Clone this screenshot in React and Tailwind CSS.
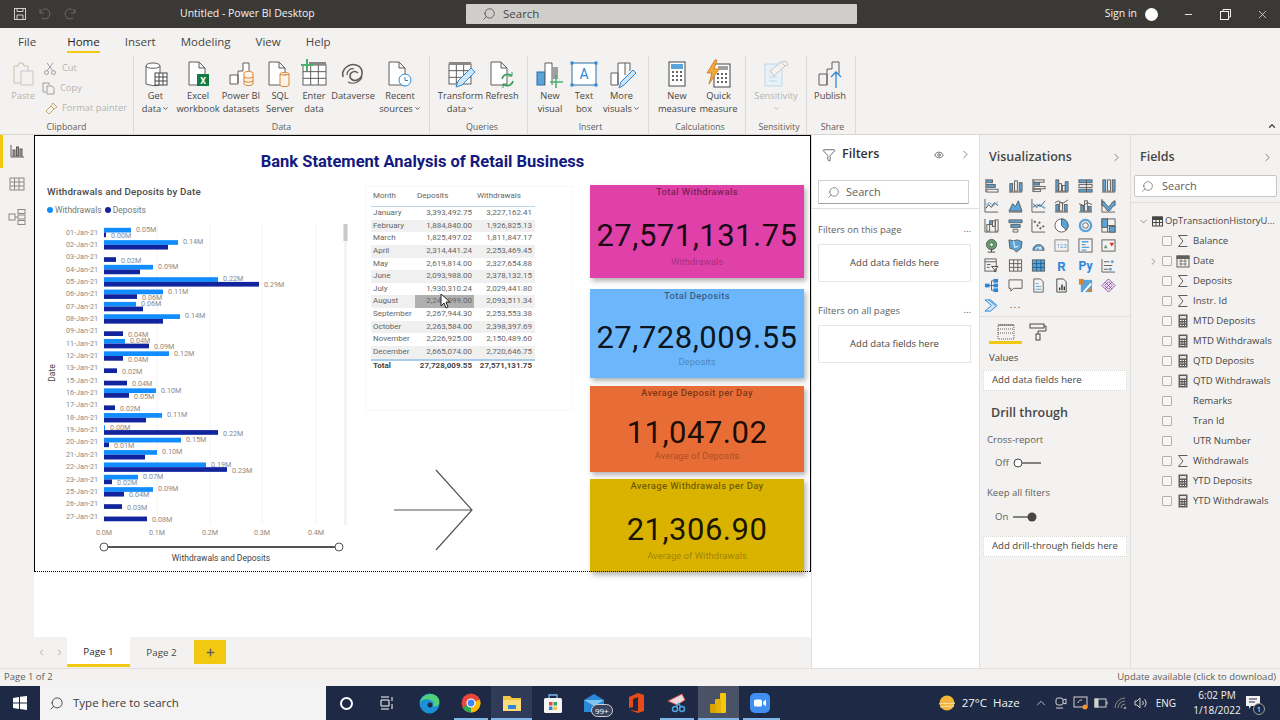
import React from "react";
import { Search, ChevronRight, ChevronDown, ChevronUp, Eye, Filter, X, Minus, Plus } from "lucide-react";

const bars = [
  ["01-Jan-21", 27, 2, "0.05M", "0.00M"],
  ["02-Jan-21", 74, 64, "0.14M", ""],
  ["03-Jan-21", 0, 12, "", "0.02M"],
  ["04-Jan-21", 49, 36, "0.09M", ""],
  ["05-Jan-21", 114, 155, "0.22M", "0.29M"],
  ["06-Jan-21", 59, 33, "0.11M", "0.06M"],
  ["07-Jan-21", 32, 39, "0.06M", ""],
  ["08-Jan-21", 76, 59, "0.14M", ""],
  ["09-Jan-21", 0, 19, "", "0.04M"],
  ["11-Jan-21", 21, 45, "0.04M", "0.09M"],
  ["12-Jan-21", 65, 19, "0.12M", "0.04M"],
  ["13-Jan-21", 0, 13, "", "0.02M"],
  ["15-Jan-21", 0, 23, "", "0.04M"],
  ["16-Jan-21", 52, 25, "0.10M", "0.05M"],
  ["17-Jan-21", 0, 11, "", "0.02M"],
  ["18-Jan-21", 58, 42, "0.11M", ""],
  ["19-Jan-21", 1, 114, "0.00M", "0.22M"],
  ["20-Jan-21", 77, 5, "0.15M", "0.01M"],
  ["21-Jan-21", 53, 41, "0.10M", ""],
  ["22-Jan-21", 102, 123, "0.19M", "0.23M"],
  ["23-Jan-21", 34, 8, "0.07M", "0.02M"],
  ["25-Jan-21", 49, 20, "0.09M", "0.04M"],
  ["26-Jan-21", 0, 18, "", "0.03M"],
  ["27-Jan-21", 0, 43, "", "0.08M"],
];

const months = [
  ["January", "3,393,492.75", "3,227,162.41"],
  ["February", "1,884,840.00", "1,926,825.13"],
  ["March", "1,825,497.02", "1,811,847.17"],
  ["April", "2,314,441.24", "2,253,469.45"],
  ["May", "2,619,814.00", "2,327,654.88"],
  ["June", "2,093,988.00", "2,378,132.15"],
  ["July", "1,930,310.24", "2,029,441.80"],
  ["August", "2,242,099.00", "2,093,511.34"],
  ["September", "2,267,944.30", "2,253,553.38"],
  ["October", "2,263,584.00", "2,398,397.69"],
  ["November", "2,226,925.00", "2,150,489.60"],
  ["December", "2,665,074.00", "2,720,646.75"],
];

const G = "#605e5c";
const B = "#5ba4d9";

const Ico = ({ children, s = 30, v = 30, stroke = G }) => (
  <svg width={s} height={s} viewBox={`0 0 ${v} ${v}`} fill="none" stroke={stroke} strokeWidth="1">
    {children}
  </svg>
);

const Grid3 = ({ x, y, w, h, stroke = G }) => (
  <g stroke={stroke}>
    <rect x={x} y={y} width={w} height={h} fill="#fff" />
    <path d={`M${x} ${y + h / 3}h${w}M${x} ${y + (2 * h) / 3}h${w}M${x + w / 3} ${y}v${h}M${x + (2 * w) / 3} ${y}v${h}`} />
  </g>
);

const Doc = ({ x = 6, stroke = G }) => (
  <path d={`M${x} 3h10l6 6v17h-16z M${x + 10} 3v6h6`} stroke={stroke} fill="#fff" />
);

const ribbonIcons = {
  paste: (
    <Ico stroke="#cbbfa9">
      <path d="M6 7h4l1-3h4l1 3h4v5M6 7v17h7" fill="#f3f2f1" />
      <path d="M13 12h12v14H13z" fill="#f3f2f1" stroke="#c8c6c4" />
    </Ico>
  ),
  getdata: (
    <Ico>
      <path d="M5 7c0-4 14-4 14 0v18c0 2-6 2.500-14 0z" fill="#fff" />
      <path d="M5 7c0 3 14 3 14 0" />
      <Grid3 x={14} y={14} w={12} h={12} stroke="#444" />
    </Ico>
  ),
  excel: (
    <Ico>
      <Doc />
      <rect x="14" y="15" width="12" height="12" fill="#107c41" stroke="none" />
      <text x="20" y="24.500" textAnchor="middle" fontSize="9" fontWeight="700" fill="#fff" stroke="none" fontFamily="Roboto, sans-serif">X</text>
    </Ico>
  ),
  pbi: (
    <Ico>
      <path d="M12 24V12h5V4h6v8M4 16h8v9H4z" fill="#fff" />
      <path d="M18 14c0-2 9-2 9 0v11c0 2-9 2-9 0z M18 18c2 1.500 7 1.500 9 0M18 22c2 1.500 7 1.500 9 0" stroke="#d9822b" fill="#fdf3e6" />
    </Ico>
  ),
  sql: (
    <Ico>
      <Doc x={4} />
      <path d="M15 15c0-2 9-2 9 0v11c0 2-9 2-9 0z M15 15c2 1.500 7 1.500 9 0" stroke="#d9822b" fill="#fdf3e6" />
    </Ico>
  ),
  enter: (
    <Ico>
      <Grid3 x={4} y={6} w={23} h={20} />
      <rect x="10" y="3" width="17" height="3" fill="#8a8886" stroke="none" />
      <path d="M8 0v12M2 6h12" stroke="#4caf6d" strokeWidth="2" />
    </Ico>
  ),
  dataverse: (
    <Ico>
      <path d="M5 18c-2-8 6-14 13-12 7 2 8 10 3 14-4 3-9 1-9-3 0-4 5-6 8-3" strokeWidth="1.600" />
      <path d="M10 23c5 3 12 0 14-5M9 16c0-5 4-7 7-6" strokeWidth="1.200" />
    </Ico>
  ),
  recent: (
    <Ico>
      <Doc x={4} />
      <circle cx="20" cy="21" r="6" fill="#fff" stroke="#2b88d8" />
      <path d="M20 18v3.500h3" stroke="#2b88d8" />
    </Ico>
  ),
  transform: (
    <Ico>
      <Grid3 x={3} y={5} w={22} h={20} />
      <rect x="3" y="3" width="22" height="3" fill="#8a8886" stroke="none" />
      <path d="M10 28l2-6 13-13 4 4-13 13z" fill="#cfe4f5" stroke="#2b88d8" />
    </Ico>
  ),
  refresh: (
    <Ico>
      <Doc x={4} />
      <path d="M15 20a6 6 0 0 1 10-3M26 22a6 6 0 0 1-10 3" stroke="#3a9a5c" strokeWidth="1.500" />
      <path d="M25 13v4h-4M16 29v-4h4" stroke="#3a9a5c" />
    </Ico>
  ),
  newvisual: (
    <Ico>
      <rect x="2" y="13" width="8" height="13" fill="#5ba4d9" stroke="#2b6ea3" />
      <path d="M10 26V4h7v22" fill="#fff" />
      <rect x="17" y="8" width="6" height="12" fill="#a19f9d" stroke="none" />
      <path d="M21 16v13M15 23h13" stroke="#4caf6d" strokeWidth="1.500" />
    </Ico>
  ),
  textbox: (
    <Ico>
      <rect x="3" y="4" width="24" height="22" stroke="#2b6ea3" fill="#fff" />
      <rect x="1.500" y="2.500" width="3" height="3" fill="#2b88d8" stroke="none" />
      <rect x="25.500" y="2.500" width="3" height="3" fill="#2b88d8" stroke="none" />
      <rect x="1.500" y="24.500" width="3" height="3" fill="#2b88d8" stroke="none" />
      <rect x="25.500" y="24.500" width="3" height="3" fill="#2b88d8" stroke="none" />
      <text x="15" y="20" textAnchor="middle" fontSize="14" fill="#2b88d8" stroke="none" fontFamily="Roboto, sans-serif">A</text>
    </Ico>
  ),
  more: (
    <Ico>
      <path d="M4 14h7v12H4zM11 26V4h7l0 12M18 4h5v8" fill="#fff" />
      <path d="M12 29l2-6 12-12 3 3-12 12z" fill="#cfe4f5" stroke="#2b88d8" />
    </Ico>
  ),
  measure: (
    <Ico>
      <rect x="7" y="3" width="16" height="24" fill="#fff" stroke="#444" />
      <rect x="9" y="5" width="12" height="5" fill="#5ba4d9" stroke="none" />
      <path d="M10 13h2M14 13h2M18 13h2M10 17h2M14 17h2M18 17h2M10 21h2M14 21h2M18 21h2" stroke="#333" strokeWidth="1.600" />
    </Ico>
  ),
  quick: (
    <Ico>
      <rect x="10" y="5" width="16" height="23" fill="#fff" stroke="#444" />
      <rect x="14" y="7" width="10" height="4" fill="#a19f9d" stroke="none" />
      <path d="M13 15h2M17 15h2M21 15h2M13 19h2M17 19h2M21 19h2M13 23h2M17 23h2M21 23h2" stroke="#333" strokeWidth="1.600" />
      <path d="M11 1L3 14h5l-3 11 10-15h-5l3-9z" fill="#f2a93b" stroke="#d9822b" />
    </Ico>
  ),
  sensitivity: (
    <Ico stroke="#bcd7ea">
      <path d="M4 5h17v22H4z" fill="#e8f1f8" />
      <path d="M9 12l11-9 4 4-11 10z M20 3l5-1 2 4-3 1" fill="#f3f2f1" stroke="#c8c6c4" />
      <path d="M8 18h8M8 22h8" />
    </Ico>
  ),
  publish: (
    <Ico>
      <path d="M4 15h8v11H4zM12 26V10h5V3h7v12" fill="#f3f2f1" />
      <path d="M21 29V13M16 18l5-5 5 5" stroke="#2b88d8" strokeWidth="1.300" />
    </Ico>
  ),
};

const vizIcons = [
  <><path d="M2 1v14" /><rect x="3" y="2" width="6" height="3" fill={B} /><rect x="3" y="7" width="9" height="3" fill={B} /><rect x="3" y="12" width="12" height="3" /></>,
  <><path d="M1 15h14" /><rect x="2" y="6" width="3" height="8" fill={B} /><rect x="7" y="3" width="3" height="11" /><rect x="12" y="5" width="3" height="9" fill={B} /></>,
  <><path d="M2 1v14" /><rect x="3" y="2" width="11" height="2.500" /><rect x="3" y="5" width="6" height="2.500" fill={B} /><rect x="3" y="9" width="12" height="2.500" /><rect x="3" y="12" width="7" height="2.500" /></>,
  <><path d="M1 15h14" /><rect x="2" y="2" width="3" height="12" fill={B} /><rect x="5" y="6" width="3" height="8" /><rect x="9" y="8" width="3" height="6" /><rect x="12" y="4" width="3" height="10" fill={B} /></>,
  <><rect x="1" y="2" width="14" height="3" fill={B} /><rect x="1" y="7" width="14" height="3" /><rect x="1" y="12" width="14" height="3" fill={B} /><path d="M9 2v13" /></>,
  <><path d="M1 15h14" /><rect x="2" y="2" width="3" height="12" fill={B} /><rect x="7" y="2" width="3" height="12" /><rect x="12" y="2" width="3" height="12" fill={B} /></>,
  <><path d="M1 1v14h14" /><path d="M2 11l3-4 3 3 3-5 4 3" stroke="#444" /><path d="M2 7l4-2 4 3 5-4" stroke={B} /></>,
  <><path d="M1 15h14" /><path d="M1 14l4-8 3 3 3-6 4 11z" fill={B} /></>,
  <><path d="M1 1v14h14" /><path d="M2 6l4 4 3-3 6 4" stroke={B} strokeWidth="1.500" /><path d="M2 10l4-3 4 2 5-6" /></>,
  <><path d="M1 15h14" /><rect x="2" y="7" width="3" height="7" fill={B} /><rect x="6" y="5" width="3" height="9" /><rect x="11" y="7" width="3" height="7" fill={B} /><path d="M1 5l4-2 4 3 6-4" /></>,
  <><path d="M1 15h14" /><rect x="3" y="8" width="3" height="6" fill={B} /><rect x="7" y="3" width="3" height="11" /><rect x="11" y="9" width="3" height="5" fill={B} /><path d="M1 6l5 2 4-3 5 2" /></>,
  <><path d="M1 3c4 0 4 6 7 6s3-6 7-6v5c-4 0-4 6-7 6s-3-6-7-6z" fill={B} /><path d="M1 1v14h14" /></>,
  <><path d="M1 1v14h14" /><rect x="3" y="7" width="3" height="7" /><rect x="6" y="3" width="3" height="4" fill={B} /><rect x="9" y="3" width="3" height="6" /><rect x="12" y="2" width="3" height="12" /></>,
  <><path d="M1 2h14v3H1z" fill={B} /><path d="M3 7h10v3H3z" fill={B} /><path d="M5.500 12h5v3h-5z" /></>,
  <><path d="M1 1v14h14" /><circle cx="4" cy="4" r=".8" fill={G} /><circle cx="7" cy="8" r=".8" fill={B} /><circle cx="10" cy="11" r=".8" fill={G} /><circle cx="13" cy="9" r=".8" fill={B} /><circle cx="9" cy="5" r=".8" fill={B} /></>,
  <><circle cx="8" cy="8" r="7" fill="#fff" /><path d="M8 8V1a7 7 0 0 1 5 12z" fill={B} /></>,
  <><circle cx="8" cy="8" r="6" stroke={B} strokeWidth="2.500" /><circle cx="8" cy="8" r="3" /></>,
  <><rect x="1" y="1" width="14" height="14" /><rect x="1" y="1" width="6" height="9" fill={B} /><rect x="9" y="9" width="6" height="6" fill={B} /><path d="M7 1v14M7 8h8" /></>,
  <><circle cx="8" cy="7" r="5.500" fill="#5f9e6e" /><path d="M4 15h8M8 12v3" stroke="#444" /><circle cx="8" cy="7" r="2" fill="#fff" /></>,
  <><path d="M1 2l5 1 4-1 5 2-1 7-5 4-3-3-4-1z" fill={B} /><path d="M6 3l1 7 4-1" stroke="#fff" /></>,
  <><path d="M2 13a6 6 0 0 1 12 0z" fill={B} /><path d="M5 13a3 3 0 0 1 6 0M8 13l3-4" stroke="#fff" /></>,
  <><rect x="1" y="2" width="14" height="12" stroke="#8a8886" /><text x="8" y="11" textAnchor="middle" fontSize="6.500" fill={B} stroke="none" fontFamily="Roboto, sans-serif">123</text></>,
  <><rect x="1" y="1" width="14" height="14" /><path d="M4 4h7M4 7h4M4 10h8M4 13h5" stroke={B} strokeWidth="1.400" /></>,
  <><rect x="1" y="2" width="14" height="12" /><path d="M3 11l2-4 2 4z" fill="#5f9e6e" stroke="none" /><path d="M9 5h5l-2.500 4z" fill="#d13438" stroke="none" /></>,
  <><rect x="1" y="1" width="12" height="13" /><path d="M1 4h12M3 7h4M3 10h3" /><path d="M8 9h7l-3 3v3l-1-1v-2z" fill="#fff" stroke="#444" /></>,
  <><rect x="1.500" y="2" width="13" height="12" /><path d="M1.500 6h13M1.500 10h13M6 2v12M10.500 2v12" /></>,
  <><rect x="1.500" y="2" width="13" height="12" fill={B} /><path d="M1.500 6h13M1.500 10h13M6 2v12M10.500 2v12" stroke="#1f5f8f" /></>,
  <text x="8" y="13.500" textAnchor="middle" fontSize="14" fontWeight="700" fill="#2b88d8" stroke="none" fontFamily="Roboto, sans-serif">R</text>,
  <text x="8" y="13" textAnchor="middle" fontSize="13" fontWeight="700" fill="#2b88d8" stroke="none" fontFamily="Roboto, sans-serif">Py</text>,
  <><path d="M1 1v14h14" /><path d="M3 4h6M3 8h9M3 12h5" /><circle cx="12" cy="4" r="1.500" fill={B} stroke="none" /><circle cx="10" cy="12" r="1.500" fill={B} stroke="none" /></>,
  <><rect x="1" y="6" width="5" height="4" fill="#2b88d8" stroke="none" /><rect x="10" y="1" width="5" height="4" fill="#2b88d8" stroke="none" /><rect x="10" y="6" width="5" height="4" fill="#2b88d8" stroke="none" /><rect x="10" y="11" width="5" height="4" fill="#2b88d8" stroke="none" /><path d="M6 8h4M8 3v10M8 3h2M8 13h2" /></>,
  <><path d="M1 2h14v9H6l-3 3v-3H1z" /></>,
  <><path d="M3 1h7l3 3v11H3z" /><path d="M5 6h3M5 9h6M5 12h6" stroke={B} /></>,
  <><path d="M3 1h7l3 3v11H3z" stroke="#444" /><path d="M6 13v-3M8.500 13V7M11 13v-4" stroke="#333" strokeWidth="1.500" /></>,
  <><rect x="3" y="2" width="12" height="13" fill={B} stroke="none" /><path d="M6 15l8-9" stroke="#fff" strokeWidth="2" /><rect x="1" y="1" width="5" height="6" fill="#d9822b" stroke="none" /><circle cx="13" cy="13" r="2" fill="#d9822b" stroke="none" /></>,
  <><path d="M8 1l7 7-7 7-7-7z" stroke="#8e44ad" /><path d="M8 4l4 4-4 4-4-4z" stroke="#8e44ad" /><path d="M4.500 4.500l7 7M11.500 4.500l-7 7" stroke="#8e44ad" /></>,
  <><path d="M1 2h6l7 6-7 6H1l7-6z" fill="#cfe4f5" stroke="#2b88d8" /><path d="M5 2l7 6" stroke="#2b88d8" /></>,
  <text x="8" y="11" textAnchor="middle" fontSize="12" fill={G} stroke="none" letterSpacing="1" fontFamily="Roboto, sans-serif">...</text>,
];

const fields = [
  ["Balance", "sum"],
  ["Date", "cal"],
  ["Deposits", "sum"],
  ["Instr. Id", "sum"],
  ["MTD Deposits", "calc"],
  ["MTD Withdrawals", "calc"],
  ["QTD Deposits", "calc"],
  ["QTD Withdrawals", "calc"],
  ["Remarks", ""],
  ["Tran Id", ""],
  ["UTR Number", ""],
  ["Withdrawals", "sum"],
  ["YTD Deposits", "calc"],
  ["YTD Withdrawals", "calc"],
];

const FieldIcon = ({ type }) => {
  if (type === "sum") {
    return (
      <svg width="12" height="14" viewBox="0 0 12 14" fill="none" stroke="#605e5c" strokeWidth="1">
        <path d="M10.500 1.500H1.500L6 7l-4.500 5.500h9" />
      </svg>
    );
  }
  if (type === "cal") {
    return (
      <svg width="14" height="14" viewBox="0 0 14 14" fill="none" stroke="#605e5c" strokeWidth="1">
        <rect x="1" y="2" width="12" height="11" />
        <rect x="1" y="2" width="12" height="2.500" fill="#605e5c" />
        <path d="M3 7h8M3 10h8M5 5v7M9 5v7" strokeWidth=".7" />
      </svg>
    );
  }
  if (type === "calc") {
    return (
      <svg width="10" height="14" viewBox="0 0 10 14" fill="none">
        <rect x=".5" y=".5" width="9" height="13" fill="#605e5c" />
        <rect x="2" y="2" width="6" height="2.500" fill="#e8e6e3" />
        <path d="M2 6.500h1.500M4.500 6.500h1.500M7 6.500h1M2 9h1.500M4.500 9h1.500M7 9h1M2 11.500h1.500M4.500 11.500h1.500M7 11.500h1" stroke="#f3f2f1" />
      </svg>
    );
  }
  return <span className="w-3" />;
};

const RibbonBtn = ({ icon, lines, caret, className }) => (
  <div className={`flex flex-col items-center text-[9.300px] leading-[13px] text-[#484644] ${className}`}>
    <div className="h-[30px] flex items-center justify-center">{ribbonIcons[icon]}</div>
    <span className="whitespace-nowrap">{lines[0]}</span>
    <span className="flex items-center whitespace-nowrap">
      {lines[1]}
      {caret && <ChevronDown size={7} strokeWidth={3} className="ml-[1px]" />}
    </span>
  </div>
);

const RibbonGroup = ({ label, className, children }) => (
  <div className={`flex flex-col h-full pt-[3px] border-r border-[#dcdad7] ${className}`}>
    <div className="flex flex-1">{children}</div>
    <div className="text-center text-[8.800px] leading-[13px] text-[#605e5c] h-[13px]">{label}</div>
  </div>
);

const Card = ({ title, value, sub, className }) => (
  <div className={`flex flex-col items-center shadow-[2px_3px_5px_rgba(0,0,0,0.3)] ${className}`}>
    <div className="mt-[1px] text-[9.500px] leading-[12px] tracking-[0.35px] font-medium text-black/50" style={{ fontFamily: "Roboto, sans-serif" }}>{title}</div>
    <div className="flex-1 flex items-center pt-4 text-[31px] leading-none tracking-[0.5px] text-black/90" style={{ fontFamily: "Roboto, sans-serif" }}>{value}</div>
    <div className="text-[9.500px] leading-[12px] mb-[10px] text-black/30" style={{ fontFamily: "Roboto, sans-serif" }}>{sub}</div>
  </div>
);

const Chart = () => (
  <svg width="315" height="345" viewBox="35 220 315 345" fontFamily="Roboto, sans-serif" className="block">
    {[104, 157, 210, 262, 316].map((x) => (
      <line key={x} x1={x} x2={x} y1="225" y2="525" stroke="#f4f4f4" />
    ))}
    <rect x="344" y="224" width="3" height="301" fill="#f3f3f3" />
    <rect x="343.500" y="224" width="4" height="17" fill="#c8c8c8" />
    {bars.map((r, i) => {
      const y = 232.5 + i * 12.35;
      return (
        <g key={r[0]} fontSize="7.2" fill="#8a8a8a">
          <text x="98" y={y + 2} textAnchor="end">{r[0]}</text>
          {r[1] > 0 && <rect x="104" y={y - 4.7} width={r[1]} height="4.7" fill="#118dff" />}
          <rect x="104" y={y} width={r[2]} height="4.7" fill="#12239e" />
          {r[3] && <text x={104 + r[1] + 5} y={y - 0.5}>{r[3]}</text>}
          {r[4] && <text x={104 + r[2] + 5} y={y + 5.5}>{r[4]}</text>}
        </g>
      );
    })}
    {[[104, "0.0M"], [157, "0.1M"], [210, "0.2M"], [262, "0.3M"], [316, "0.4M"]].map(([x, t]) => (
      <text key={t} x={x} y="535" textAnchor="middle" fontSize="7.2" fill="#8a8a8a">{t}</text>
    ))}
    <line x1="104" x2="339" y1="547" y2="547" stroke="#555" strokeWidth="2" />
    <circle cx="104" cy="547" r="4" fill="#fff" stroke="#555" />
    <circle cx="339" cy="547" r="4" fill="#fff" stroke="#555" />
    <text x="221" y="561" textAnchor="middle" fontSize="8.500" fill="#444">Withdrawals and Deposits</text>
    <text transform="translate(55 373) rotate(-90)" textAnchor="middle" fontSize="8.500" fill="#444">Date</text>
  </svg>
);

const DataTable = () => (
  <div className="ml-[15px] mt-[1px] w-[208px] h-[225px] pl-[5px] border border-[#f8f8f8] text-[8px] text-[#666] leading-[12.640px]" style={{ fontFamily: "Roboto, sans-serif" }}>
    <div className="grid grid-cols-[44px_59px_61px] w-[164px] h-[20px] border-b border-[#bcd7ea] items-center">
      <span className="pl-[2px]">Month</span>
      <span className="pl-[2px]">Deposits</span>
      <span className="pl-[3px]">Withdrawals</span>
    </div>
    {months.map((m, i) => (
      <div key={m[0]} className={`grid grid-cols-[44px_59px_61px] w-[164px] ${i % 2 === 1 ? "bg-[#f0f0f0]" : ""}`}>
        <span className="pl-[2px]">{m[0]}</span>
        <span className={`text-right pr-[2px] ${m[0] === "August" ? "bg-[#b0b0b0]" : ""}`}>{m[1]}</span>
        <span className="text-right pr-[3px]">{m[2]}</span>
      </div>
    ))}
    <div className="grid grid-cols-[44px_59px_61px] w-[164px] border-t-2 border-[#a9cde8] font-bold text-[#444] leading-[9px]">
      <span className="pl-[2px]">Total</span>
      <span className="text-right pr-[2px]">27,728,009.55</span>
      <span className="text-right pr-[3px]">27,571,131.75</span>
    </div>
  </div>
);

const Toggle = ({ on }) => (
  <div className="flex items-center h-[14px] pl-[15px] text-[9.600px] text-[#605e5c]">
    <span className="w-[18px]">{on ? "On" : "Off"}</span>
    {on ? (
      <svg width="26" height="12" viewBox="0 0 26 12"><path d="M0 6h20" stroke="#605e5c" strokeWidth="1.500" /><circle cx="19" cy="6" r="4.500" fill="#484644" /></svg>
    ) : (
      <svg width="32" height="12" viewBox="0 0 32 12"><path d="M6 6h22" stroke="#605e5c" strokeWidth="1.500" /><circle cx="5" cy="6" r="4" fill="#fff" stroke="#484644" /></svg>
    )}
  </div>
);

const TaskIcon = ({ children, className = "" }) => (
  <div className={`relative h-full flex items-center justify-center ${className}`}>{children}</div>
);

export default function App() {
  return (
    <div className="w-[1280px] h-[720px] overflow-hidden flex flex-col bg-[#f3f2f1] text-[#323130]" style={{ fontFamily: '"Open Sans", sans-serif' }}>
      {/* title bar */}
      <div className="h-[28px] flex items-center bg-[#3a3936] text-[#f3f2f1] shrink-0">
        <div className="w-[180px] flex items-center pl-[14px] gap-[13px]">
          <svg width="12" height="12" viewBox="0 0 12 12" fill="none" stroke="#d2d0ce"><rect x=".5" y=".5" width="11" height="11" /><path d="M3 .5v3h6v-3M3 11.500V7h6v4.500" /></svg>
          <svg width="12" height="12" viewBox="0 0 12 12" fill="none" stroke="#6b6a67"><path d="M1 1v4h4M1 5a5 5 0 1 1 2 5" /></svg>
          <svg width="12" height="12" viewBox="0 0 12 12" fill="none" stroke="#6b6a67"><path d="M11 1v4H7M11 5a5 5 0 1 0-2 5" /></svg>
        </div>
        <div className="w-[286px] text-[10.500px]">Untitled - Power BI Desktop</div>
        <div className="w-[391px] h-[20px] flex items-center bg-[#cfcecb] rounded-[1px] pl-[16px] gap-[7px] text-[#484644] text-[11.500px]">
          <Search size={14} strokeWidth={1.3} className="scale-x-[-1]" />
          Search
        </div>
        <div className="flex-1 flex items-center justify-end text-[10.500px]">
          <span>Sign in</span>
          <span className="ml-[8px] w-[13px] h-[13px] rounded-full bg-white" />
          <Minus size={11} className="ml-[25px]" />
          <svg width="11" height="11" viewBox="0 0 11 11" fill="none" stroke="#f3f2f1" className="ml-[26px]"><rect x=".5" y="2.500" width="8" height="8" /><path d="M3 2.500v-2h7.500v7.500h-2" /></svg>
          <X size={13} strokeWidth={1.3} className="ml-[25px] mr-[11px]" />
        </div>
      </div>

      {/* tabs */}
      <div className="h-[28px] flex items-center shrink-0 text-[11.500px] text-[#484644] relative">
        <span className="ml-[18px]">File</span>
        <span className="ml-[31px] text-[#252423] font-medium border-b-[2px] border-[#f2c811] h-[22px] leading-[22px]">Home</span>
        <span className="ml-[25px]">Insert</span>
        <span className="ml-[25px]">Modeling</span>
        <span className="ml-[25px]">View</span>
        <span className="ml-[25px]">Help</span>
      </div>

      {/* ribbon */}
      <div className="h-[79px] flex items-stretch shrink-0 relative border-b border-[#d8d6d3]">
        <RibbonGroup label="Clipboard" className="w-[134px] text-[#b5b3b0]">
          <div className="w-[41px] flex flex-col items-center text-[9.300px] leading-[13px] text-[#b5b3b0] pl-[5px]">
            <div className="h-[30px] flex items-center">{ribbonIcons.paste}</div>
            <span>Paste</span>
          </div>
          <div className="flex flex-col gap-[6px] pt-[2px] text-[9.300px] leading-[14px] text-[#b5b3b0]">
            <div className="flex items-center gap-[4px] pl-[3px]">
              <svg width="12" height="13" viewBox="0 0 12 13" fill="none" stroke="#a19f9d"><path d="M3 1l6 8M9 1L3 9" /><circle cx="2.500" cy="10.500" r="2" /><circle cx="9.500" cy="10.500" r="2" /></svg>
              <span className="ml-[2px]">Cut</span>
            </div>
            <div className="flex items-center gap-[4px] pl-[1px]">
              <svg width="14" height="13" viewBox="0 0 14 13" fill="none" stroke="#a19f9d"><path d="M1 1h6v2M1 1v9h3M5 4h5l2 2v6H5z" /></svg>
              <span>Copy</span>
            </div>
            <div className="flex items-center gap-[4px] pl-[3px]">
              <svg width="14" height="13" viewBox="0 0 14 13" fill="none" stroke="#c9a96e"><path d="M9 1l4 4-3 2-3-3zM7 4L2 9l3 3 5-5" /></svg>
              <span className="whitespace-nowrap">Format painter</span>
            </div>
          </div>
        </RibbonGroup>
        <RibbonGroup label="Data" className="w-[296px]">
          <RibbonBtn icon="getdata" lines={["Get", "data"]} caret className="w-[43px]" />
          <RibbonBtn icon="excel" lines={["Excel", "workbook"]} className="w-[42px]" />
          <RibbonBtn icon="pbi" lines={["Power BI", "datasets"]} className="w-[44px]" />
          <RibbonBtn icon="sql" lines={["SQL", "Server"]} className="w-[34px]" />
          <RibbonBtn icon="enter" lines={["Enter", "data"]} className="w-[34px]" />
          <RibbonBtn icon="dataverse" lines={["Dataverse", ""]} className="w-[44px]" />
          <RibbonBtn icon="recent" lines={["Recent", "sources"]} caret className="w-[50px]" />
        </RibbonGroup>
        <RibbonGroup label="Queries" className="w-[98px] pl-[7px]">
          <RibbonBtn icon="transform" lines={["Transform", "data"]} caret className="w-[47px]" />
          <RibbonBtn icon="refresh" lines={["Refresh", ""]} className="w-[36px]" />
        </RibbonGroup>
        <RibbonGroup label="Insert" className="w-[121px] pl-[5px]">
          <RibbonBtn icon="newvisual" lines={["New", "visual"]} className="w-[34px]" />
          <RibbonBtn icon="textbox" lines={["Text", "box"]} className="w-[34px]" />
          <RibbonBtn icon="more" lines={["More", "visuals"]} caret className="w-[41px]" />
        </RibbonGroup>
        <RibbonGroup label="Calculations" className="w-[97px] pl-[6px]">
          <RibbonBtn icon="measure" lines={["New", "measure"]} className="w-[44px]" />
          <RibbonBtn icon="quick" lines={["Quick", "measure"]} className="w-[39px]" />
        </RibbonGroup>
        <RibbonGroup label="Sensitivity" className="w-[61px] pl-[6px]">
          <div className="w-[48px] flex flex-col items-center text-[9.300px] leading-[13px] text-[#b5b3b0]">
            <div className="h-[30px] flex items-center">{ribbonIcons.sensitivity}</div>
            <span>Sensitivity</span>
            <ChevronDown size={7} strokeWidth={3} className="mt-[3px]" />
          </div>
        </RibbonGroup>
        <RibbonGroup label="Share" className="w-[49px] pl-[3px]">
          <RibbonBtn icon="publish" lines={["Publish", ""]} className="w-[40px]" />
        </RibbonGroup>
        <ChevronUp size={10} strokeWidth={3} className="absolute right-[3px] bottom-[3px] text-[#484644]" />
      </div>

      {/* main */}
      <div className="flex h-[533px] shrink-0">
        {/* view rail */}
        <div className="w-[34px] shrink-0 flex flex-col items-center relative pt-[7px] gap-[15px]">
          <div className="absolute left-0 top-0 w-[3px] h-[33px] bg-[#f2c811]" />
          <svg width="18" height="18" viewBox="0 0 18 18" fill="none" stroke="#605e5c"><path d="M3 3v12h13" /><rect x="5" y="8" width="2" height="6" fill="#a19f9d" /><rect x="8.500" y="5" width="2" height="9" fill="#a19f9d" /><rect x="12" y="7" width="2" height="7" fill="#a19f9d" /></svg>
          <svg width="18" height="18" viewBox="0 0 18 18" fill="none" stroke="#8a8886"><rect x="2" y="3" width="14" height="12" /><path d="M2 7h14M2 11h14M6.500 3v12M11 3v12" /></svg>
          <svg width="18" height="18" viewBox="0 0 18 18" fill="none" stroke="#8a8886"><rect x="10" y="1.500" width="7" height="4" /><rect x="10" y="7" width="7" height="4" /><rect x="10" y="12.500" width="7" height="4" /><rect x="1" y="6" width="6" height="6" /><path d="M7 9h3" /></svg>
        </div>

        {/* canvas */}
        <div className="w-[777px] shrink-0 flex flex-col bg-white">
          <div className="h-[437px] border border-black border-b-0 relative">
            <div className="h-[49px] flex items-center justify-center pt-[3px] text-[16.500px] font-bold text-[#14197f]" style={{ fontFamily: "Roboto, sans-serif" }}>
              Bank Statement Analysis of Retail Business
            </div>
            <div className="flex">
              <div className="w-[315px] shrink-0">
                <div className="pl-[12px] mt-[1px] text-[9.800px] leading-[12px] font-medium tracking-[0.15px] text-[#4a4a4a]" style={{ fontFamily: "Roboto, sans-serif" }}>Withdrawals and Deposits by Date</div>
                <div className="pl-[12px] mt-[6px] h-[12px] flex items-center text-[8.500px] text-[#777]" style={{ fontFamily: "Roboto, sans-serif" }}>
                  <span className="w-[6px] h-[6px] rounded-full bg-[#118dff] mr-[2px]" />
                  <span className="mr-[3px]">Withdrawals</span>
                  <span className="w-[6px] h-[6px] rounded-full bg-[#12239e] mr-[2px]" />
                  <span>Deposits</span>
                </div>
                <div className="mt-[4px]"><Chart /></div>
              </div>
              <div className="w-[240px] shrink-0 relative">
                <DataTable />
                <svg width="80" height="82" viewBox="0 0 80 82" fill="none" stroke="#555" strokeWidth="1.200" className="ml-[44px] mt-[58px]">
                  <path d="M0 41h78M42 1l36 40-36 40" />
                </svg>
                <svg width="12" height="16" viewBox="0 0 12 16" className="absolute left-[90px] top-[108px]">
                  <path d="M1 1v12l3-3 2 5 2-1-2-5h4z" fill="#fff" stroke="#222" />
                </svg>
              </div>
              <div className="w-[214px] shrink-0 flex flex-col">
                <Card title="Total Withdrawals" value="27,571,131.75" sub="Withdrawals" className="h-[93px] bg-[#e041a9]" />
                <Card title="Total Deposits" value="27,728,009.55" sub="Deposits" className="h-[89px] mt-[11px] bg-[#6cb6fc]" />
                <Card title="Average Deposit per Day" value="11,047.02" sub="Average of Deposits" className="h-[86px] mt-[8px] bg-[#e86c35]" />
                <Card title="Average Withdrawals per Day" value="21,306.90" sub="Average of Withdrawals" className="h-[93px] mt-[7px] bg-[#d9b300]" />
              </div>
            </div>
            <div className="absolute left-0 right-0 bottom-0 border-b border-dotted border-black" />
          </div>
          <div className="h-[65px]" />
          <div className="h-[31px] flex items-stretch bg-[#f3f2f1] text-[9.800px] text-[#484644] pb-[1px]">
            <div className="w-[33px] flex items-center justify-center gap-[9px] text-[#c8c6c4]">
              <ChevronRight size={9} strokeWidth={3} className="rotate-180" />
              <ChevronRight size={9} strokeWidth={3} />
            </div>
            <div className="w-[63px] flex items-center justify-center pt-[3px] bg-white border-b-[3px] border-[#f2c811] text-[#252423]">Page 1</div>
            <div className="w-[63px] flex items-center justify-center pt-[3px]">Page 2</div>
            <div className="ml-[1px] w-[32px] my-[3px] flex items-center justify-center bg-[#f2c811]">
              <Plus size={11} strokeWidth={3} className="text-[#605e5c]" />
            </div>
          </div>
        </div>

        {/* filters */}
        <div className="w-[168px] shrink-0 bg-white border-l border-[#e1dfdd] flex flex-col">
          <div className="h-[37px] flex items-center pl-[10px] pt-[2px] text-[12.500px] font-semibold text-[#323130]">
            <Filter size={14} strokeWidth={1.2} />
            <span className="ml-[6px]">Filters</span>
            <Eye size={10} className="ml-auto text-[#605e5c]" />
            <ChevronRight size={13} strokeWidth={1.2} className="ml-[15px] mr-[7px] text-[#484644]" />
          </div>
          <div className="ml-[6px] mt-[8px] h-[24px] w-[151px] flex items-center border border-[#d2d0ce] border-b-[#a19f9d] rounded-[1px] pl-[8px] gap-[6px] text-[11px] text-[#605e5c]">
            <Search size={13} strokeWidth={1.2} className="scale-x-[-1]" />
            Search
          </div>
          <div className="mt-[4px] border-t border-[#e1dfdd]" />
          <div className="mt-[14px] pl-[6px] pr-[7px] flex justify-between text-[9.500px] text-[#605e5c] leading-[14px]">
            <span>Filters on this page</span>
            <span className="mr-[1px] -mt-[1px]">...</span>
          </div>
          <div className="ml-[6px] mr-[8px] mt-[7px] h-[38px] flex items-center justify-center border border-[#e8e6e4] rounded-[1px] text-[9.500px] text-[#484644]">Add data fields here</div>
          <div className="mt-[22px] pl-[6px] pr-[7px] flex justify-between text-[9.500px] text-[#605e5c] leading-[14px]">
            <span>Filters on all pages</span>
            <span className="mr-[1px] -mt-[1px]">...</span>
          </div>
          <div className="ml-[6px] mr-[8px] mt-[7px] h-[38px] flex items-center justify-center border border-[#e8e6e4] rounded-[1px] text-[9.500px] text-[#484644]">Add data fields here</div>
        </div>

        {/* visualizations */}
        <div className="w-[151px] shrink-0 border-l border-[#e1dfdd] flex flex-col">
          <div className="h-[40px] flex items-center pl-[9px] pt-[4px] text-[12.500px] font-semibold text-[#484644]">
            Visualizations
            <ChevronRight size={13} strokeWidth={1.2} className="ml-auto mr-[7px]" />
          </div>
          <div className="grid grid-cols-[repeat(6,23.400px)] auto-rows-[20px] justify-items-center items-center">
            {vizIcons.map((ic, i) => (
              <Ico key={i} s={15} v={16}>{ic}</Ico>
            ))}
          </div>
          <div className="mt-[1px] border-t border-[#e1dfdd]" />
          <div className="flex h-[27px] pl-[9px] pt-[6px]">
            <div className="w-[33px] h-[21px] flex justify-center border-b-[3px] border-[#f2c811]">
              <svg width="18" height="18" viewBox="0 0 18 18" fill="none" stroke="#605e5c"><rect x="1" y="2" width="16" height="14" strokeDasharray="1 1" /><path d="M1 6h16M1 10h16" strokeDasharray="1 1" /><path d="M1 2h16" /></svg>
            </div>
            <div className="ml-[7px]">
              <svg width="18" height="18" viewBox="0 0 18 18" fill="none" stroke="#484644"><rect x="1" y="1" width="14" height="4" /><path d="M15 3h2v5H9v3" /><rect x="7" y="11" width="4" height="6" /></svg>
            </div>
          </div>
          <div className="mt-[7px] pl-[9px] text-[9.600px] leading-[14px] text-[#484644]">Values</div>
          <div className="mx-[3px] mt-[5px] h-[21px] pl-[8px] flex items-center bg-white border border-dotted border-[#d8d6d3] text-[9.600px] text-[#484644]">Add data fields here</div>
          <div className="mt-[13px] pl-[11px] text-[12.500px] leading-[18px] font-semibold text-[#484644]">Drill through</div>
          <div className="mt-[11px] pl-[7px] text-[9.600px] leading-[14px] text-[#605e5c]">Cross-report</div>
          <div className="mt-[9px]"><Toggle /></div>
          <div className="mt-[16px] pl-[7px] text-[9.600px] leading-[14px] text-[#605e5c]">Keep all filters</div>
          <div className="mt-[10px]"><Toggle on /></div>
          <div className="mx-[3px] mt-[12px] h-[21px] flex items-center justify-center bg-white border border-dotted border-[#d8d6d3] text-[9.600px] whitespace-nowrap text-[#484644]">Add drill-through fields here</div>
        </div>

        {/* fields */}
        <div className="flex-1 border-l border-[#e1dfdd] flex flex-col">
          <div className="h-[40px] flex items-center pl-[9px] pt-[4px] text-[12.500px] font-semibold text-[#484644]">
            Fields
            <ChevronRight size={13} strokeWidth={1.2} className="ml-auto mr-[6px]" />
          </div>
          <div className="mx-[3px] h-[22px] flex items-center bg-white border border-[#c8c6c4] rounded-[2px] pl-[6px] gap-[8px] text-[11px] text-[#605e5c]">
            <Search size={13} strokeWidth={1.2} className="scale-x-[-1]" />
            Search
          </div>
          <div className="mt-[5px] border-t border-[#e1dfdd]" />
          <div className="mt-[8px] h-5 flex items-center pl-[7px] text-[9.400px] whitespace-nowrap text-[#484644]">
            <ChevronDown size={11} strokeWidth={1.2} />
            <svg width="11" height="11" viewBox="0 0 11 11" fill="none" stroke="#484644" className="ml-[3px]"><rect x=".5" y="1" width="10" height="9" /><path d="M.5 1h10v2.500H.5z" fill="#484644" /><path d="M.5 6.500h10M4 1v9M7.500 1v9" /></svg>
            <span className="ml-[2px]">OpTransactionHistoryU...</span>
          </div>
          {fields.map(([name, type]) => (
            <div key={name} className="relative h-5 flex items-center pl-[31px] text-[9.600px] text-[#484644]">
              {name === "Date" && <ChevronRight size={11} strokeWidth={1.2} className="absolute left-[17px]" />}
              <span className="w-[10px] h-[10px] bg-[#f8f7f6] border border-[#b3b1af] rounded-[1px] shrink-0" />
              <span className="w-[21px] flex justify-center">
                <FieldIcon type={type} />
              </span>
              <span className="whitespace-nowrap">{name}</span>
            </div>
          ))}
        </div>
      </div>

      {/* status */}
      <div className="h-[18px] shrink-0 flex items-center justify-between px-[4px] border-t border-[#e1dfdd] text-[9.500px] text-[#605e5c]">
        <span>Page 1 of 2</span>
        <span>Update available (click to download)</span>
      </div>

      {/* taskbar */}
      <div className="h-[34px] shrink-0 flex items-stretch bg-[#1e2a45] text-[#f3f2f1]">
        <div className="w-[40px] flex items-center justify-center">
          <svg width="14" height="14" viewBox="0 0 14 14" fill="#fff"><path d="M0 2l6-1v5.500H0zM7 .8L14 0v6.500H7zM0 7.500h6V13l-6-1zM7 7.500h7V14l-7-1z" /></svg>
        </div>
        <div className="w-[286px] bg-[#f3f3f3] flex items-center pl-[9px] gap-[9px] text-[11.500px] text-[#3b3b3b]">
          <Search size={15} strokeWidth={1.4} className="scale-x-[-1]" />
          Type here to search
        </div>
        <div className="grid grid-cols-[repeat(11,41.300px)] h-full">
          <TaskIcon><span className="w-[13px] h-[13px] rounded-full border-2 border-white" /></TaskIcon>
          <TaskIcon>
            <svg width="15" height="14" viewBox="0 0 15 14" fill="none" stroke="#fff"><path d="M1 1h8M1 13h8M1 4h8v6H1zM12 1v4M12 8v5" /></svg>
          </TaskIcon>
          <TaskIcon>
            <svg width="21" height="21" viewBox="0 0 21 21"><circle cx="10.500" cy="10.500" r="10" fill="#1c8fd6" /><path d="M1 10C2 3 10-1 16 2c4 2 5 6 4 9-1 2-4 3-7 2 2-1 2-4 0-5C9 5 3 6 1 10z" fill="#4fd07a" /><circle cx="11" cy="12" r="2.500" fill="#1e2a45" /></svg>
          </TaskIcon>
          <TaskIcon className="after:absolute after:left-[4px] after:right-[3px] after:bottom-0 after:h-[2px] after:bg-[#7fb7e8]">
            <svg width="20" height="20" viewBox="0 0 20 20"><circle cx="10" cy="10" r="9.500" fill="#e8453c" /><path d="M10 10L1.500 14.500A9.500 9.500 0 0 0 10 19.500z" fill="#34a853" /><path d="M10 10l8.800-3.500A9.500 9.500 0 0 1 10 19.500z" fill="#fbbc05" /><circle cx="10" cy="10" r="4.600" fill="#fff" /><circle cx="10" cy="10" r="3.400" fill="#4285f4" /></svg>
          </TaskIcon>
          <TaskIcon className="bg-[#2f3b58] after:absolute after:left-0 after:right-0 after:bottom-0 after:h-[2px] after:bg-[#7fb7e8]">
            <svg width="20" height="18" viewBox="0 0 20 18"><path d="M1 2h7l2 2h9v13H1z" fill="#f5c542" /><rect x="1" y="6" width="18" height="11" fill="#fbdc7a" /><rect x="6" y="11" width="8" height="4" fill="#2b88d8" /></svg>
          </TaskIcon>
          <TaskIcon>
            <svg width="20" height="21" viewBox="0 0 20 21"><path d="M6 5V2h8v3" fill="none" stroke="#7fb7e8" strokeWidth="1.300" /><rect x="1" y="5" width="18" height="15" rx="1.500" fill="#f5f5f5" /><rect x="6" y="9" width="3.500" height="3.500" fill="#e8453c" /><rect x="10.500" y="9" width="3.500" height="3.500" fill="#34a853" /><rect x="6" y="13.500" width="3.500" height="3.500" fill="#2b88d8" /><rect x="10.500" y="13.500" width="3.500" height="3.500" fill="#f5c542" /></svg>
          </TaskIcon>
          <TaskIcon>
            <svg width="22" height="20" viewBox="0 0 22 20"><path d="M1 7l10-6 10 6v12H1z" fill="#2b88d8" /><path d="M1 7l10 6 10-6" fill="#7fc4f0" /></svg>
            <span className="absolute left-[17px] bottom-[3px] w-[22px] h-[13px] rounded-full bg-[#3a4660] border border-[#d2d0ce] text-[8px] leading-[11px] text-center text-white">99+</span>
          </TaskIcon>
          <TaskIcon>
            <svg width="18" height="20" viewBox="0 0 18 20"><path d="M2 4l9-4 6 2v16l-6 2-9-3 9 1V4L6 6v8l-4 1z" fill="#e64a19" /></svg>
          </TaskIcon>
          <TaskIcon className="after:absolute after:left-[4px] after:right-[4px] after:bottom-0 after:h-[2px] after:bg-[#7fb7e8]">
            <svg width="20" height="20" viewBox="0 0 20 20" fill="none"><path d="M1 8l14-7 3 6-8 5z" fill="#f0d9d9" stroke="#c94f4f" /><circle cx="8" cy="16" r="2.500" stroke="#4ca3e0" strokeWidth="1.500" /><circle cx="15" cy="16" r="2.500" stroke="#4ca3e0" strokeWidth="1.500" /><path d="M9 14l3-4M14 14l-3-4" stroke="#4ca3e0" strokeWidth="1.500" /></svg>
          </TaskIcon>
          <TaskIcon className="bg-[#4a5266] after:absolute after:left-0 after:right-0 after:bottom-0 after:h-[2px] after:bg-[#7fb7e8]">
            <svg width="16" height="20" viewBox="0 0 16 20"><rect x="10" y="0" width="6" height="20" rx="1" fill="#f2c811" /><rect x="5" y="6" width="6" height="14" rx="1" fill="#e8b10c" /><rect x="0" y="11" width="6" height="9" rx="1" fill="#d9a400" /></svg>
          </TaskIcon>
          <TaskIcon className="after:absolute after:left-[4px] after:right-[0px] after:bottom-0 after:h-[2px] after:bg-[#7fb7e8]">
            <svg width="20" height="20" viewBox="0 0 20 20"><rect width="20" height="20" rx="5" fill="#3f8ef0" /><rect x="4" y="6.500" width="8" height="7" rx="1.500" fill="#fff" /><path d="M13 9l3-2.500v7L13 11z" fill="#fff" /></svg>
          </TaskIcon>
        </div>
        <div className="flex-1 flex items-center justify-end text-[11.500px]">
          <svg width="18" height="18" viewBox="0 0 18 18"><circle cx="9" cy="9" r="7.500" fill="#f2b53c" /><path d="M1 10c5-2 11 1 16-1M2 13c5-2 9 1 14-1" stroke="#f8e3b0" fill="none" /></svg>
          <span className="ml-[6px] whitespace-nowrap">27°C&nbsp; Haze</span>
          <div className="ml-[11px] w-[20px] flex justify-center"><ChevronUp size={14} strokeWidth={1.2} /></div>
          <div className="w-[20px] flex justify-center">
            <svg width="13" height="14" viewBox="0 0 13 14" fill="none" stroke="#d2d0ce"><rect x="2" y="2" width="7" height="7" rx="2" /><path d="M9 4l3-1v5l-3-1M2 12h7" /></svg>
          </div>
          <div className="w-[20px] flex justify-center">
            <svg width="15" height="14" viewBox="0 0 15 14" fill="none" stroke="#d2d0ce"><rect x="1" y="1" width="13" height="10" /><circle cx="12" cy="11" r="2.500" fill="#f2952c" stroke="none" /><path d="M5 7c0-2 2-3 4-3" /></svg>
          </div>
          <div className="w-[20px] flex justify-center">
            <svg width="14" height="10" viewBox="0 0 14 10" fill="none" stroke="#d2d0ce"><rect x="1" y="1" width="11" height="8" /><rect x="1" y="1" width="3" height="8" fill="#d2d0ce" /><path d="M13 3.500v3" /></svg>
          </div>
          <div className="w-[20px] flex justify-center">
            <svg width="13" height="12" viewBox="0 0 13 12" fill="none" stroke="#8a8886"><path d="M1 11a10 10 0 0 1 10-10M4 11a7 7 0 0 1 7-7M7 11a4 4 0 0 1 4-4" /><circle cx="11" cy="11" r="1" fill="#d2d0ce" /></svg>
          </div>
          <div className="w-[20px] flex justify-center">
            <svg width="14" height="12" viewBox="0 0 14 12" fill="none" stroke="#d2d0ce"><path d="M1 4h2l3-3v10L3 8H1zM8.500 4a3 3 0 0 1 0 4M10.500 2a6 6 0 0 1 0 8" /></svg>
          </div>
          <span className="ml-[5px] text-[10px]">ENG</span>
          <div className="ml-[18px] flex flex-col items-center text-[10px] leading-[15px] w-[46px]">
            <span>6:02 PM</span>
            <span>1/18/2022</span>
          </div>
          <div className="relative ml-[6px] mr-[20px] w-[14px] h-[14px]">
            <svg width="14" height="13" viewBox="0 0 14 13" fill="#f3f2f1"><path d="M0 0h14v10H5l-2 3v-3H0z" /><path d="M3 3h8M3 6h6" stroke="#1e2a45" /></svg>
            <span className="absolute -right-[5px] -bottom-[5px] w-[12px] h-[12px] rounded-full bg-[#1e2a45] border border-[#a19f9d] text-[7.500px] leading-[10px] text-center text-white">1</span>
          </div>
        </div>
      </div>
    </div>
  );
}
